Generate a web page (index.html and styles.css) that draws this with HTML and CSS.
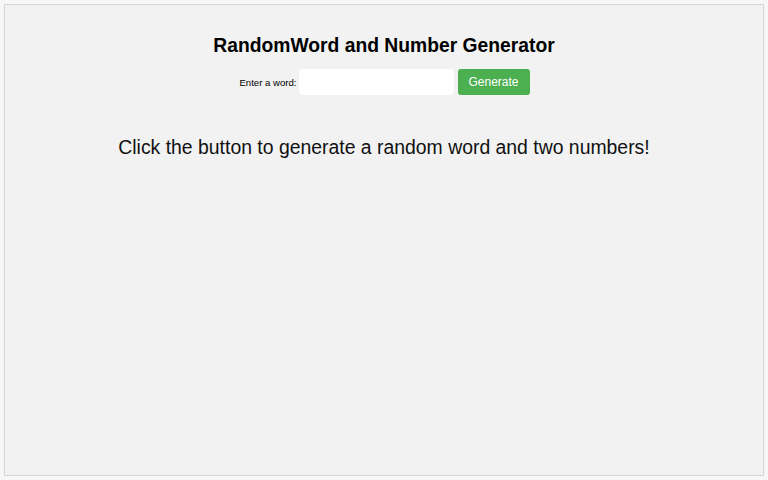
FILE: index.html
```html
<!DOCTYPE html>
<html>
<head>
<meta charset="utf-8">
<link rel="stylesheet" href="styles.css">
</head>
<body>
<div class="container">
  <h1 class="title">RandomWord and Number Generator</h1>
  <div class="form-row">
    <label class="label" for="word">Enter a word:</label>
    <input class="word-input" id="word" type="text">
    <button class="generate-btn">Generate</button>
  </div>
  <p class="result">Click the button to generate a random word and two numbers!</p>
</div>
</body>
</html>
```
FILE: styles.css
```css
html, body {
  margin: 0;
  padding: 0;
}
body {
  background: #f7f7f7;
  padding: 4px;
  font-family: "Liberation Sans", Arial, sans-serif;
  color: #111;
}
.container {
  box-sizing: border-box;
  height: 472px;
  width: 760px;
  border: 1px solid #d6d6d6;
  background: #f2f2f2;
  display: flex;
  flex-direction: column;
  align-items: center;
  padding-top: 30px;
}
.title {
  margin: 0;
  font-size: 19.3px;
  font-weight: bold;
  line-height: 22px;
  color: #000;
}
.form-row {
  margin-top: 12px;
  display: flex;
  align-items: center;
  padding-left: 1px;
}
.label {
  font-size: 9.6px;
  color: #000;
  margin-right: 2px;
}
.word-input {
  box-sizing: border-box;
  width: 155px;
  height: 26px;
  border: none;
  border-radius: 4px;
  background: #fff;
  outline: none;
  margin: 0;
}
.generate-btn {
  box-sizing: border-box;
  height: 26px;
  width: 72px;
  margin: 0 0 0 4px;
  border: none;
  border-radius: 3px;
  background: #4caf50;
  color: #fff;
  font-family: "Liberation Sans", Arial, sans-serif;
  font-size: 12px;
  padding: 0;
}
.result {
  margin: 40px 0 0 0;
  font-size: 19.4px;
  line-height: 24px;
  color: #111;
}
```
